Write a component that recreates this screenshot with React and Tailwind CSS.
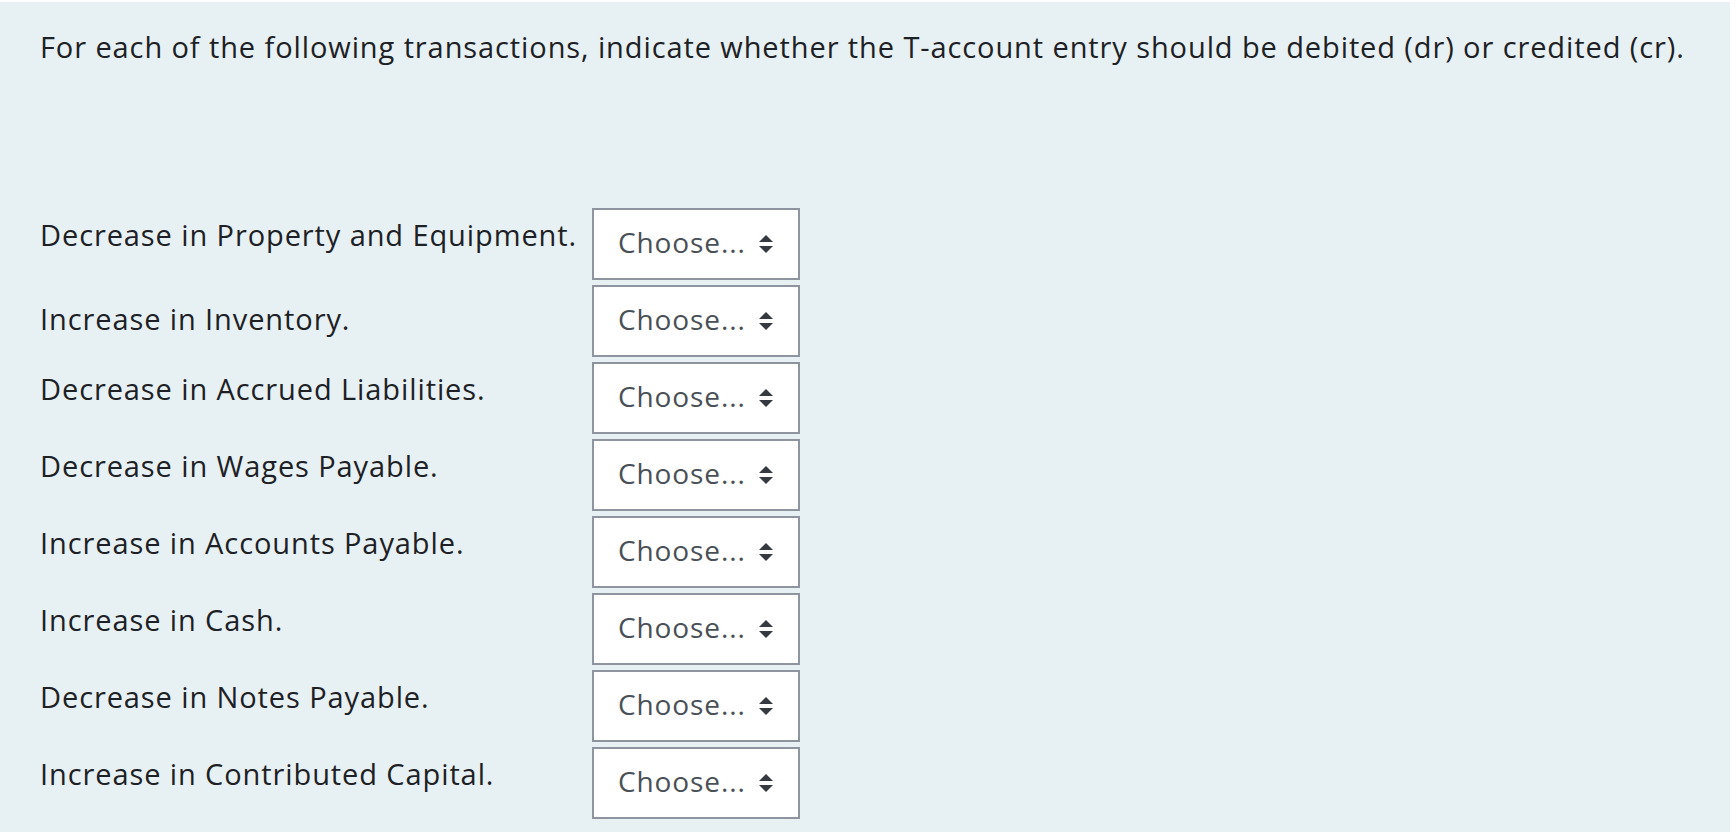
const rows = [
  { label: "Decrease in Property and Equipment.", pad: "pt-[7px]" },
  { label: "Increase in Inventory.", pad: "pt-[14px]" },
  { label: "Decrease in Accrued Liabilities.", pad: "pt-[7px]" },
  { label: "Decrease in Wages Payable.", pad: "pt-[7px]" },
  { label: "Increase in Accounts Payable.", pad: "pt-[7px]" },
  { label: "Increase in Cash.", pad: "pt-[7px]" },
  { label: "Decrease in Notes Payable.", pad: "pt-[7px]" },
  { label: "Increase in Contributed Capital.", pad: "pt-[7px]" },
];

export default function App() {
  return (
    <div className="min-h-[832px] bg-white pt-[2px] pr-[6px] font-['Open_Sans',sans-serif] tracking-[0.9px]">
      <div className="min-h-[830px] bg-[#e7f1f4] pl-[40px] pt-[25px] text-[#1d2125]">
        <p className="text-[29px] leading-[40px]">
          For each of the following transactions, indicate whether the T-account entry should be debited (dr) or credited (cr).
        </p>
        <div className="mt-[141px] flex flex-col gap-[5px]">
          {rows.map((row) => (
            <Row key={row.label} {...row} />
          ))}
        </div>
      </div>
    </div>
  );
}

function Row({ label, pad }) {
  return (
    <div className="flex items-start">
      <div className={`w-[552px] text-[29px] leading-[40px] ${pad}`}>{label}</div>
      <div className="relative h-[72px] w-[208px]">
        <select
          defaultValue=""
          className="h-full w-full appearance-none border-2 border-[#8f959e] bg-white pb-[4px] pl-[24px] text-[28px] tracking-[0.9px] text-[#495057] outline-none"
        >
          <option value="">Choose...</option>
          <option value="dr">dr</option>
          <option value="cr">cr</option>
        </select>
        <svg
          viewBox="0 0 16 20"
          className="pointer-events-none absolute left-[166px] top-[26px] h-[20px] w-[16px]"
        >
          <path d="M8 1 L15 8 H1 Z" fill="#343a40" />
          <path d="M8 19 L15 12 H1 Z" fill="#343a40" />
        </svg>
      </div>
    </div>
  );
}
